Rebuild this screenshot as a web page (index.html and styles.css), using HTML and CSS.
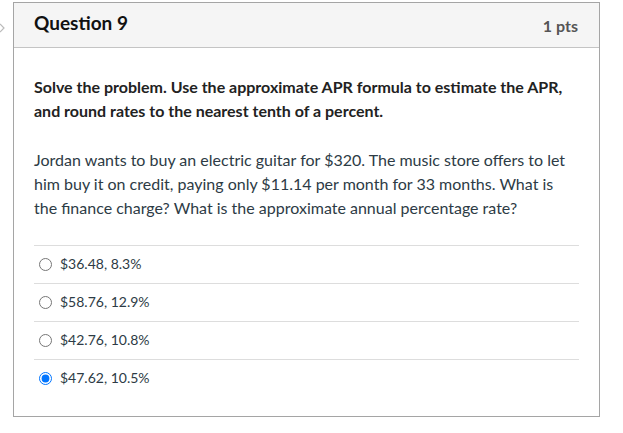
FILE: index.html
```html
<!DOCTYPE html>
<html>
<head>
<meta charset="utf-8">
<link rel="stylesheet" href="styles.css">
</head>
<body>
<div class="page">
  <span class="chev">
    <svg width="6" height="10" viewBox="0 0 6 10"><path d="M1 1 L5 5 L1 9" fill="none" stroke="#bbb" stroke-width="1.2"/></svg>
  </span>
  <div class="card">
    <div class="header">
      <h2 class="title">Question 9</h2>
      <span class="pts">1 pts</span>
    </div>
    <div class="content">
      <p class="lead">Solve the problem. Use the approximate APR formula to estimate the APR, and round rates to the nearest tenth of a percent.</p>
      <p class="text">Jordan wants to buy an electric guitar for $320. The music store offers to let him buy it on credit, paying only $11.14 per month for 33 months. What is the finance charge? What is the approximate annual percentage rate?</p>
      <div class="answers">
        <label class="answer"><input type="radio" name="q9"><span class="label">$36.48, 8.3%</span></label>
        <label class="answer"><input type="radio" name="q9"><span class="label">$58.76, 12.9%</span></label>
        <label class="answer"><input type="radio" name="q9"><span class="label">$42.76, 10.8%</span></label>
        <label class="answer"><input type="radio" name="q9" checked><span class="label">$47.62, 10.5%</span></label>
      </div>
    </div>
  </div>
</div>
</body>
</html>
```
FILE: styles.css
```css
html, body {
  margin: 0;
  padding: 0;
  background: #fff;
}
body {
  font-family: Lato, "Open Sans", sans-serif;
  color: #2d3b45;
}
.page {
  position: relative;
  padding: 2px 0 0 13px;
}
.chev {
  position: absolute;
  left: -1px;
  top: 17px;
}
.card {
  width: 585px;
  border: 1px solid #a5a5a5;
}
.header {
  display: flex;
  justify-content: space-between;
  align-items: center;
  height: 44px;
  padding: 0 21px 0 20px;
  background: #f5f5f5;
  border-bottom: 1px solid #c4c4c4;
}
.title {
  margin: 0 0 5px;
  font-size: 19px;
  font-weight: 700;
  color: #111;
}
.pts {
  font-size: 16px;
  font-weight: 700;
  color: #555;
}
.content {
  padding: 27px 20px 19px;
}
.lead {
  margin: 0;
  font-size: 16px;
  font-weight: 700;
  line-height: 24px;
  color: #222;
}
.text {
  margin: 25px 0 0;
  font-size: 16px;
  line-height: 24px;
  color: #2d3b45;
}
.answers {
  margin-top: 25px;
}
.answer {
  display: flex;
  align-items: center;
  height: 37px;
  border-top: 1px solid #ddd;
  font-size: 14px;
  color: #2d3b45;
}
.answer input {
  margin: 0 8px 0 5px;
  width: 13px;
  height: 13px;
}
.label {
  padding-bottom: 3px;
}
```
